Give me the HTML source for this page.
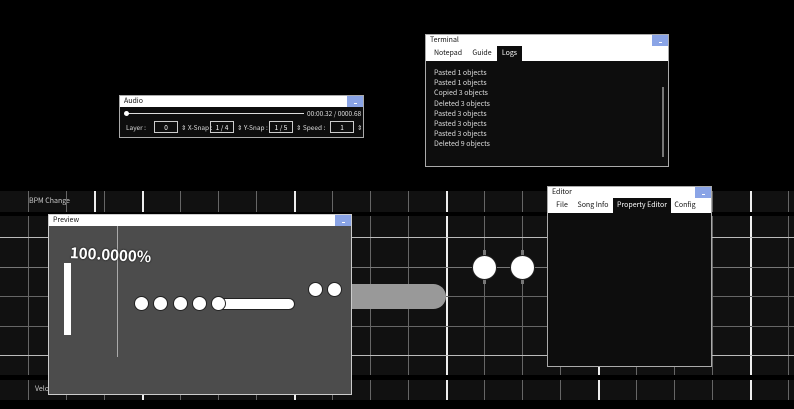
<!DOCTYPE html><html><head><style>
body{margin:0;width:794px;height:409px;background:#000;position:relative;overflow:hidden;font-family:"Noto Sans CJK JP","DejaVu Sans",sans-serif;font-size:7px;color:#ddd}
.a{position:absolute;white-space:nowrap}
.win{position:absolute;background:#0d0d0d;border:1px solid #aaa;box-sizing:border-box}
.tb{position:absolute;left:0;right:0;top:0;height:11px;background:#fff;color:#111;font-size:7px;padding-left:4px;line-height:11px}
.min{position:absolute;right:0;top:0;width:16px;height:11px;background:#8aa4e6}
.min:after{content:"";position:absolute;left:7px;top:7px;width:3px;height:1px;background:#fff}
.tabs{position:absolute;left:0;right:0;top:11px;height:15px;background:#fff;color:#111}
.tabs span{position:absolute;top:0;height:15px;line-height:15px;text-align:center;white-space:nowrap}
.tabs .on{background:#0d0d0d;color:#fff}
.vl{position:absolute;width:1px;background:#666}
.hl{position:absolute;height:1px;left:0;width:794px;background:#666}
.c{position:absolute;width:20px;height:20px;border-radius:50%;background:#fff;border:1px solid #222;box-sizing:border-box}
.in{position:absolute;border:1px solid #ccc;top:0;text-align:center;line-height:10px;color:#fff;box-sizing:border-box;height:12px}
</style></head><body>
<div class="a" style="left:0;top:191px;width:794px;height:21px;background:#111"></div>
<div class="a" style="left:0;top:216px;width:794px;height:159px;background:#111"></div>
<div class="a" style="left:0;top:380px;width:794px;height:20px;background:#111"></div>
<div class="a" style="left:29px;top:196px;color:#ccc">BPM Change</div>
<div class="a" style="left:35px;top:384px;color:#ccc">Velo</div>
<div id="g"></div>
<div class="hl" style="top:237px;background:#bbb"></div>
<div class="hl" style="top:267px;background:#777"></div>
<div class="hl" style="top:296px;background:#666"></div>
<div class="hl" style="top:326px;background:#666"></div>
<div class="hl" style="top:355px;background:#bbb"></div>
<script>
var h='';for(var k=0;k<21;k++){var x=28+38*k;var t=(x==142||x==294||x==446||x==598||x==750);
[[191,21],[216,159],[380,20]].forEach(function(r){h+='<div class="vl" style="left:'+x+'px;top:'+r[0]+'px;height:'+r[1]+'px;'+(t?'width:2px;background:#eee':'background:#666')+'"></div>';});}
h+='<div class="vl" style="left:94px;top:191px;height:21px;width:2px;background:#eee"></div>';
document.getElementById('g').innerHTML=h;
</script>
<div class="a" style="left:330px;top:284px;width:116px;height:25px;border-radius:0 13px 13px 0;background:#999"></div>
<div class="a" style="left:483px;top:250px;width:3px;height:34px;background:#777"></div>
<div class="a" style="left:521px;top:250px;width:3px;height:34px;background:#777"></div>
<div class="c" style="left:472px;top:255px;width:25px;height:25px"></div>
<div class="c" style="left:510px;top:255px;width:25px;height:25px"></div>

<div class="win" style="left:425px;top:34px;width:244px;height:133px">
<div class="tb">Terminal</div><div class="min"></div>
<div class="tabs"><span style="left:4px;width:36px">Notepad</span><span style="left:42px;width:28px">Guide</span><span class="on" style="left:71px;width:25px">Logs</span></div>
<div class="a" style="left:8px;top:33px;line-height:10.2px;color:#ddd">Pasted 1 objects<br>Pasted 1 objects<br>Copied 3 objects<br>Deleted 3 objects<br>Pasted 3 objects<br>Pasted 3 objects<br>Pasted 3 objects<br>Deleted 9 objects</div>
<div class="a" style="left:236px;top:52px;width:2px;height:70px;background:#777"></div>
</div>

<div class="win" style="left:119px;top:95px;width:245px;height:43px">
<div class="tb">Audio</div><div class="min"></div>
<div class="a" style="left:6px;top:17px;width:178px;height:1px;background:#ddd"></div>
<div class="a" style="left:4px;top:15px;width:5px;height:5px;border-radius:50%;background:#fff"></div>
<div class="a" style="left:187px;top:12px;font-size:6.5px">00:00.32 / 0000.68</div>
<div class="a" style="left:6px;top:25px;width:236px;height:12px;font-size:6.5px">
<span class="a" style="left:0;top:1px">Layer :</span><span class="in" style="left:28px;width:24px">0</span><span class="a" style="left:55px;top:1px">⇕ X-Snap :</span><span class="in" style="left:84px;width:24px">1 / 4</span><span class="a" style="left:111px;top:1px">⇕ Y-Snap :</span><span class="in" style="left:143px;width:24px">1 / 5</span><span class="a" style="left:170px;top:1px">⇕ Speed :</span><span class="in" style="left:204px;width:24px">1</span><span class="a" style="left:231px;top:1px">⇕</span></div>
</div>

<div class="win" style="left:547px;top:186px;width:165px;height:181px">
<div class="tb">Editor</div><div class="min"></div>
<div class="tabs"><span style="left:4px;width:20px">File</span><span style="left:28px;width:34px">Song Info</span><span class="on" style="left:65px;width:58px">Property Editor</span><span style="left:124px;width:26px">Config</span></div>
</div>

<div class="win" style="left:48px;top:214px;width:304px;height:181px;background:#4c4c4c;border-color:#ccc">
<div class="tb">Preview</div><div class="min"></div>
<div class="a" style="left:68px;top:11px;width:1px;height:131px;background:#aaa"></div>
<div class="a" style="left:21px;top:27px;font-size:15px;font-weight:bold;color:#fff;text-shadow:0 0 2px #000;transform:rotate(3deg);transform-origin:left">100.0000%</div>
<div class="a" style="left:15px;top:48px;width:7px;height:72px;background:#fff"></div>
<div class="a" style="left:168px;top:83px;width:78px;height:12px;border-radius:6px;background:#fff;border:1px solid #222;box-sizing:border-box"></div>
<div class="c" style="left:85px;top:81px;width:15px;height:15px"></div>
<div class="c" style="left:104px;top:81px;width:15px;height:15px"></div>
<div class="c" style="left:124px;top:81px;width:15px;height:15px"></div>
<div class="c" style="left:143px;top:81px;width:15px;height:15px"></div>
<div class="c" style="left:162px;top:81px;width:15px;height:15px"></div>
<div class="c" style="left:259px;top:67px;width:15px;height:15px"></div>
<div class="c" style="left:278px;top:67px;width:15px;height:15px"></div>
</div>
</body></html>
